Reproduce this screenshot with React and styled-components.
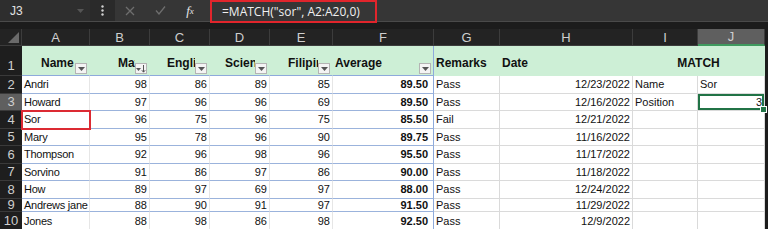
import React from 'react';
import styled, { createGlobalStyle } from 'styled-components';

const Global = createGlobalStyle`
  html, body { margin: 0; padding: 0; background: #1c1c1c; }
  body { font-family: "Liberation Sans", Arial, sans-serif; }
`;

const Page = styled.div`
  width: 768px;
  height: 229px;
  overflow: hidden;
  background: #1c1c1c;
  display: flex;
  flex-direction: column;
`;

const Toolbar = styled.div`
  height: 21px;
  display: flex;
  align-items: stretch;
  background: #363636;
  border-bottom: 1px solid #4a4a4a;
  flex-shrink: 0;
`;

const NameBox = styled.div`
  width: 90px;
  background: #2e2e2e;
  display: flex;
  align-items: center;
  justify-content: space-between;
  padding: 0 6px 0 10px;
  box-sizing: border-box;
  color: #e2e2e2;
  font-size: 12px;
`;

const Dots = styled.div`
  width: 25px;
  background: #2a2a2a;
  display: flex;
  align-items: center;
  justify-content: center;
`;

const IconSlot = styled.div`
  width: 30px;
  display: flex;
  align-items: center;
  justify-content: center;
  color: ${p => (p.$dim ? '#6e6e6e' : '#e6e6e6')};
  font-family: "Liberation Serif", serif;
  font-style: italic;
  font-size: 13px;
`;

const Formula = styled.div`
  width: 167px;
  height: 23px;
  margin-left: 5px;
  box-sizing: border-box;
  border: 2px solid #e1252c;
  display: flex;
  align-items: center;
  padding-left: 10px;
  color: #f0f0f0;
  font-family: "Open Sans", "Liberation Sans", sans-serif;
  font-size: 12px;
  white-space: nowrap;
  position: relative;
  z-index: 2;
`;

const Gap = styled.div`
  height: 7px;
  flex-shrink: 0;
`;

const Sheet = styled.div`
  display: grid;
  grid-template-columns: 22px 68px 60px 60px 60px 63px 101px 66px 133px 65px 67px 3px;
  grid-template-rows: 17px 30px repeat(7, 17.5px) 13.5px 18px;
  background: #fff;
`;

const Corner = styled.div`
  background: #232323;
  border-right: 1px solid #3c3c3c;
  border-bottom: 1px solid #3c3c3c;
  display: flex;
  align-items: flex-end;
  justify-content: flex-end;
  padding: 0 2px 2px 0;
`;

const ColHead = styled.div`
  background: ${p => (p.$active ? '#5f5f5f' : '#232323')};
  border-right: 1px solid #3c3c3c;
  border-bottom: ${p => (p.$active ? '2px solid #3f9a5f' : '1px solid #3c3c3c')};
  color: #cfcfcf;
  font-size: 13px;
  display: flex;
  align-items: center;
  justify-content: center;
`;

const RowHead = styled.div`
  background: ${p => (p.$active ? '#5f5f5f' : '#1e1e1e')};
  border-bottom: 1px solid #3a3a3a;
  color: #cfcfcf;
  font-size: 13px;
  display: flex;
  align-items: ${p => (p.$tall ? 'flex-end' : 'center')};
  justify-content: center;
  padding-bottom: ${p => (p.$tall ? '3px' : '0')};
  line-height: 1;
`;

const Edge = styled.div`
  background: #1c1c1c;
`;

const HeadCell = styled.div`
  position: relative;
  background: #cdefd6;
  border-bottom: 1px solid ${p => (p.$table ? '#8eaadb' : '#cdefd6')};
  border-right: 1px solid ${p => (p.$edge ? '#8eaadb' : '#cdefd6')};
  grid-column: ${p => p.$span || 'auto'};
  display: flex;
  align-items: center;
  justify-content: ${p => (p.$center ? 'center' : 'flex-start')};
  padding: 5px ${p => (p.$filter ? 14 : 0)}px 0 ${p => p.$pad || 0}px;
  font-weight: bold;
  font-size: 12px;
  color: #111;
  min-width: 0;
`;

const Label = styled.span`
  overflow: hidden;
  white-space: nowrap;
  min-width: 0;
`;

const FilterBtn = styled.div`
  position: absolute;
  right: 2px;
  bottom: 1px;
  width: 12px;
  height: 11px;
  box-sizing: border-box;
  background: #f4f4f4;
  border: 1px solid #b4b4b4;
  display: flex;
  align-items: center;
  justify-content: center;
`;

const Cell = styled.div`
  position: relative;
  background: #fff;
  border-bottom: 1px solid ${p => (p.$table ? '#9bb3dc' : '#dadada')};
  border-right: 1px solid ${p => (p.$edge ? '#8eaadb' : p.$table ? '#e6e6e6' : '#dadada')};
  display: flex;
  align-items: center;
  justify-content: ${p => (p.$right ? 'flex-end' : 'flex-start')};
  padding: 0 ${p => (p.$bold ? 5 : 2)}px 0 2px;
  font-size: 11px;
  letter-spacing: ${p => (p.$tight ? '-0.25px' : '0')};
  font-weight: ${p => (p.$bold ? 'bold' : 'normal')};
  color: #111;
  white-space: nowrap;
  outline: ${p => (p.$marked ? '2px solid #dc2a33' : 'none')};
  outline-offset: -1px;
  box-shadow: ${p => (p.$selected ? 'inset 0 0 0 2px #217346' : 'none')};
  z-index: ${p => (p.$marked || p.$selected ? 1 : 0)};
`;

const Handle = styled.span`
  position: absolute;
  right: -3px;
  bottom: -3px;
  width: 5px;
  height: 5px;
  background: #217346;
  border: 1px solid #fff;
`;

const Caret = () => (
  <svg width="7" height="4" viewBox="0 0 7 4">
    <path d="M0 0h7L3.5 4z" fill="#555" />
  </svg>
);

const SortCaret = () => (
  <svg width="10" height="8" viewBox="0 0 10 8">
    <path d="M0 3h5L2.5 6z" fill="#555" />
    <path d="M7.5 0v7M5.8 5.2l1.7 2 1.7-2" stroke="#555" strokeWidth="1" fill="none" />
  </svg>
);

const columns = ['A', 'B', 'C', 'D', 'E', 'F', 'G', 'H', 'I', 'J'];

const heads = [
  { text: 'Name', pad: 19, filter: true },
  { text: 'Math', pad: 28, filter: true, sort: true },
  { text: 'English', pad: 17, filter: true },
  { text: 'Science', pad: 15, filter: true },
  { text: 'Filipino', pad: 18, filter: true },
  { text: 'Average', pad: 2, filter: true, edge: true },
  { text: 'Remarks', pad: 2 },
  { text: 'Date', pad: 2 },
];

const rows = [
  ['Andri', 98, 86, 89, 85, '89.50', 'Pass', '12/23/2022', 'Name', 'Sor'],
  ['Howard', 97, 96, 96, 69, '89.50', 'Pass', '12/16/2022', 'Position', '3'],
  ['Sor', 96, 75, 96, 75, '85.50', 'Fail', '12/21/2022', '', ''],
  ['Mary', 95, 78, 96, 90, '89.75', 'Pass', '11/16/2022', '', ''],
  ['Thompson', 92, 96, 98, 96, '95.50', 'Pass', '11/17/2022', '', ''],
  ['Sorvino', 91, 86, 97, 86, '90.00', 'Pass', '11/18/2022', '', ''],
  ['How', 89, 97, 69, 97, '88.00', 'Pass', '12/24/2022', '', ''],
  ['Andrews jane', 88, 90, 91, 97, '91.50', 'Pass', '11/29/2022', '', ''],
  ['Jones', 88, 98, 86, 98, '92.50', 'Pass', '12/9/2022', '', ''],
];

export default function App() {
  return (
    <Page>
      <Global />
      <Toolbar>
        <NameBox>
          J3
          <Caret />
        </NameBox>
        <Dots>
          <svg width="3" height="11" viewBox="0 0 3 11">
            <circle cx="1.5" cy="1.5" r="1.2" fill="#d0d0d0" />
            <circle cx="1.5" cy="5.5" r="1.2" fill="#d0d0d0" />
            <circle cx="1.5" cy="9.5" r="1.2" fill="#d0d0d0" />
          </svg>
        </Dots>
        <IconSlot $dim>
          <svg width="10" height="10" viewBox="0 0 10 10">
            <path d="M1 1l8 8M9 1l-8 8" stroke="#6e6e6e" strokeWidth="1.3" />
          </svg>
        </IconSlot>
        <IconSlot $dim>
          <svg width="11" height="9" viewBox="0 0 11 9">
            <path d="M1 4.5l3 3.5 6-7.5" stroke="#6e6e6e" strokeWidth="1.3" fill="none" />
          </svg>
        </IconSlot>
        <IconSlot>
          f<sub style={{ fontSize: '9px' }}>x</sub>
        </IconSlot>
        <Formula>=MATCH("sor", A2:A20,0)</Formula>
      </Toolbar>
      <Gap />
      <Sheet>
        <Corner>
          <svg width="11" height="11" viewBox="0 0 11 11">
            <path d="M11 0v11H0z" fill="#6a6a6a" />
          </svg>
        </Corner>
        {columns.map(c => (
          <ColHead key={c} $active={c === 'J'}>{c}</ColHead>
        ))}
        <Edge />

        <RowHead $tall>1</RowHead>
        {heads.map((h, i) => (
          <HeadCell key={h.text} $pad={h.pad} $table={i < 6} $edge={h.edge} $filter={h.filter}>
            <Label>{h.text}</Label>
            {h.filter && <FilterBtn>{h.sort ? <SortCaret /> : <Caret />}</FilterBtn>}
          </HeadCell>
        ))}
        <HeadCell $span="span 2" $center>MATCH</HeadCell>
        <Edge />

        {rows.map((r, ri) => {
          const n = ri + 2;
          return (
            <React.Fragment key={n}>
              <RowHead $active={n === 3}>{n}</RowHead>
              {r.map((v, ci) => (
                <Cell
                  key={ci}
                  $table={ci < 6}
                  $edge={ci === 5}
                  $tight={ci === 0}
                  $right={(ci >= 1 && ci <= 5) || ci === 7 || (ci === 9 && n === 3)}
                  $bold={ci === 5}
                  $marked={ci === 0 && n === 4}
                  $selected={ci === 9 && n === 3}
                >
                  {v}
                  {ci === 9 && n === 3 && <Handle />}
                </Cell>
              ))}
              <Edge />
            </React.Fragment>
          );
        })}
      </Sheet>
    </Page>
  );
}
